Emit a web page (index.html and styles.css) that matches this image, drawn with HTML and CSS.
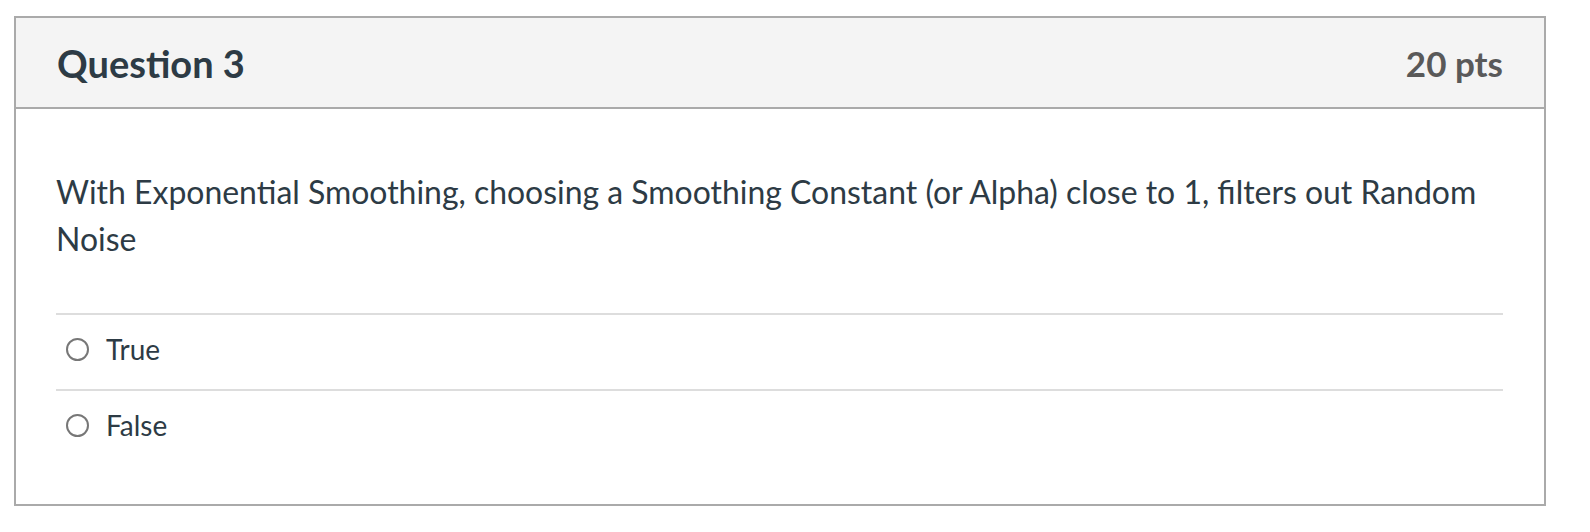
FILE: index.html
```html
<!DOCTYPE html>
<html lang="en">
<head>
<meta charset="utf-8">
<title>Question 3</title>
<link rel="stylesheet" href="styles.css">
</head>
<body>
  <div class="question">
    <div class="question-header">
      <h2 class="question-title">Question 3</h2>
      <span class="question-points">20 pts</span>
    </div>
    <div class="question-body">
      <p class="question-text">With Exponential Smoothing, choosing a Smoothing Constant (or Alpha) close to 1, filters out Random Noise</p>
      <div class="answers">
        <label class="answer">
          <span class="radio"></span>
          <span class="answer-label">True</span>
        </label>
        <label class="answer">
          <span class="radio"></span>
          <span class="answer-label">False</span>
        </label>
      </div>
    </div>
  </div>
</body>
</html>
```
FILE: styles.css
```css
html, body {
  margin: 0;
  padding: 0;
  background: #ffffff;
}

body {
  padding: 16px 0 0 14px;
  font-family: Lato, "Noto Sans", "Liberation Sans", sans-serif;
  color: #2d3b45;
}

.question {
  width: 1528px;
  height: 486px;
  border: 2px solid #aaaaaa;
  display: flex;
  flex-direction: column;
}

.question-header {
  height: 89px;
  background: #f4f4f4;
  border-bottom: 2px solid #aaaaaa;
  display: flex;
  align-items: center;
  justify-content: space-between;
  padding: 0 41px 0 41px;
}

.question-title {
  margin: 0;
  font-size: 38px;
  font-weight: 700;
  color: #2d3b45;
}

.question-points {
  font-size: 35px;
  font-weight: 700;
  color: #595959;
}

.question-body {
  padding: 60px 41px 0 40px;
}

.question-text {
  margin: 0;
  font-size: 31.95px;
  line-height: 46.7px;
}

.answers {
  margin-top: 51px;
}

.answer {
  display: flex;
  align-items: center;
  border-top: 2px solid #dddddd;
  box-sizing: border-box;
  height: 76px;
  padding: 0 0 6px 10px;
}

.radio {
  width: 23px;
  height: 23px;
  box-sizing: border-box;
  border: 2px solid #777777;
  border-radius: 50%;
  flex: none;
}

.answer-label {
  margin-left: 17px;
  font-size: 28px;
}
```
